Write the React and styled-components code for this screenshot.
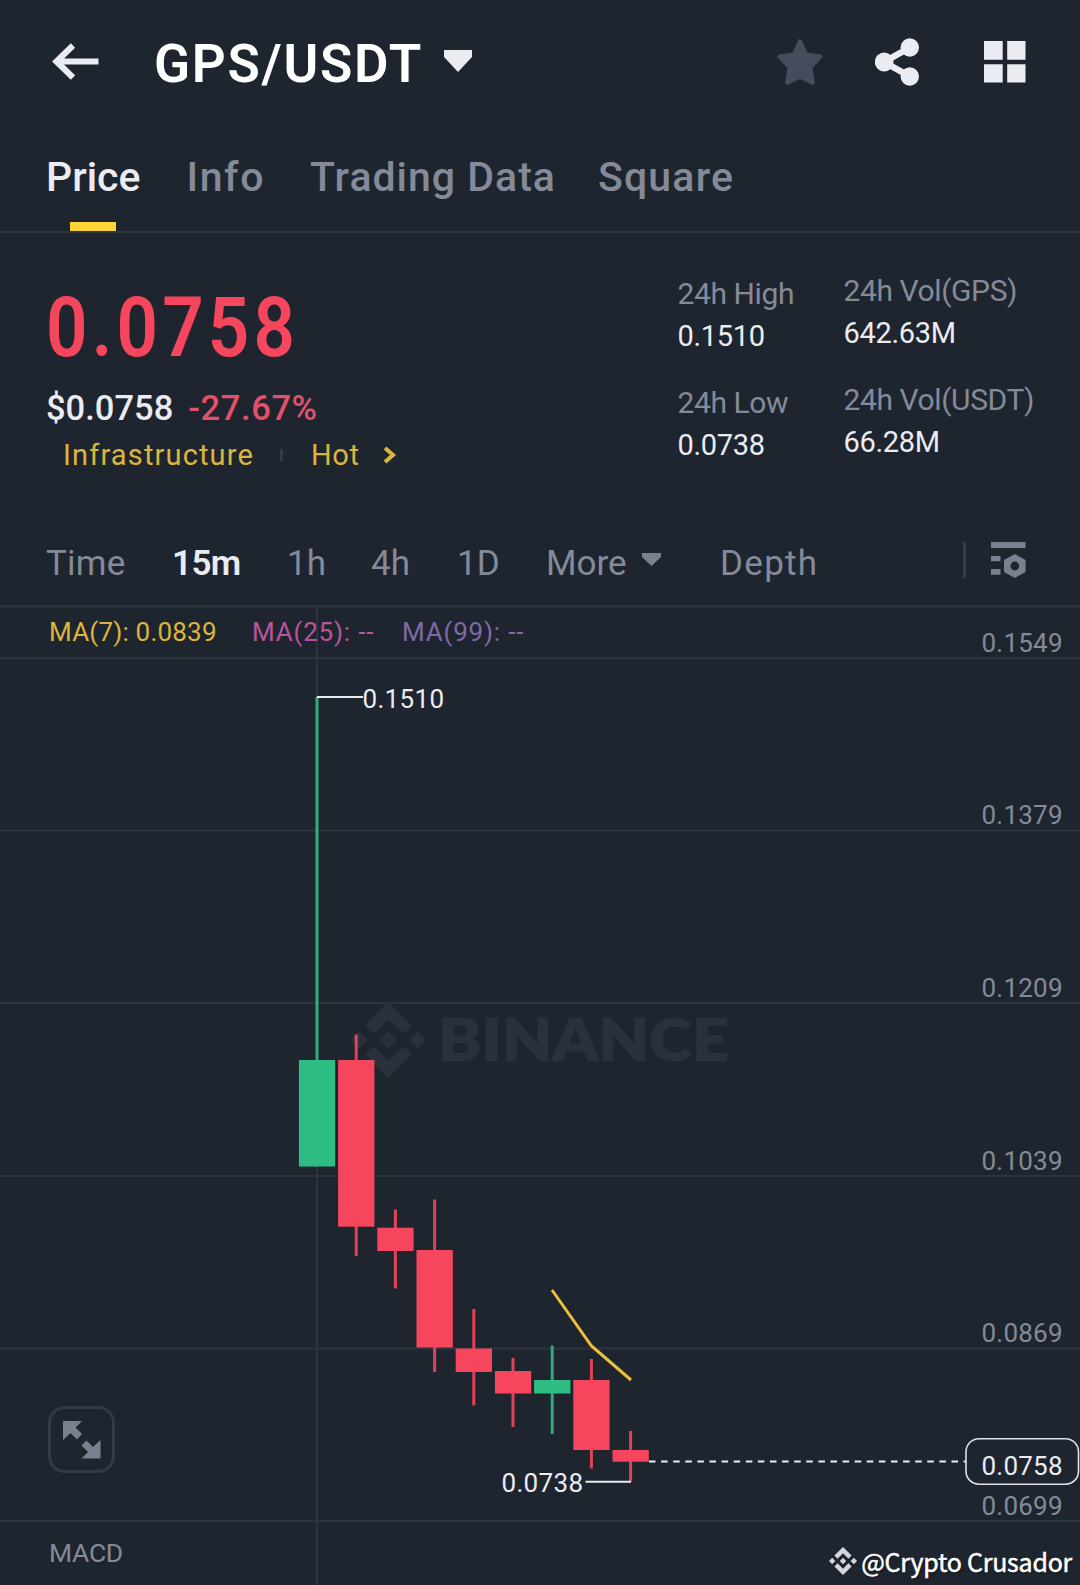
import React from "react";
import styled, { createGlobalStyle } from "styled-components";

const GlobalStyle = createGlobalStyle`
  :root {
    --color-bg: #1f252f;
    --color-line: #2f3540;
    --color-light: #eaecf2;
    --color-muted: #858a98;
    --color-red: #f6465d;
    --color-green: #2ebd85;
    --color-yellow: #dcb63c;
  }

  * {
    box-sizing: border-box;
  }

  body {
    margin: 0;
    background-color: var(--color-bg);
    font-family: Roboto, "Liberation Sans", sans-serif;
    color: var(--color-light);
  }

  svg {
    display: block;
    flex-shrink: 0;
  }
`;

const Screen = styled.div`
  width: 1080px;
  height: 1585px;
  overflow: hidden;
  display: flex;
  flex-direction: column;
  background-color: var(--color-bg);
`;

const Header = styled.header`
  height: 123px;
  padding: 0 54px 0 52px;
  display: flex;
  align-items: center;
`;

const Title = styled.h1`
  margin: 0 21px 0 55px;
  padding-top: 4px;
  font-size: 53px;
  line-height: 60px;
  font-weight: 600;
  letter-spacing: 1.7px;
  color: #fff;
`;

const TitleArrow = styled.svg`
  margin-bottom: 1px;
`;

const HeaderActions = styled.div`
  margin-left: auto;
  display: flex;
  align-items: center;
`;

const ActionIcon = styled.svg`
  margin-left: ${(props) => props.$gap || 0}px;
`;

const Tabs = styled.nav`
  height: 110px;
  padding-left: 46px;
  display: flex;
  border-bottom: 2px solid var(--color-line);
`;

const Tab = styled.div`
  height: 108px;
  padding-top: 9px;
  margin-right: ${(props) => props.$gap || 45}px;
  display: flex;
  flex-direction: column;
  align-items: center;
  font-size: 41px;
  line-height: 90px;
  font-weight: 500;
  letter-spacing: ${(props) => props.$spacing || 0}px;
  color: ${(props) => (props.$active ? "var(--color-light)" : "var(--color-muted)")};
`;

const TabBar = styled.div`
  width: 46px;
  height: 9px;
  background-color: #fcd535;
`;

const Ticker = styled.section`
  height: 287px;
  padding-left: 46px;
  display: flex;
`;

const PriceColumn = styled.div`
  width: 631.5px;
  padding-top: 53px;
`;

const LastPrice = styled.div`
  font-size: 83.5px;
  line-height: 84px;
  font-weight: 600;
  letter-spacing: 4.8px;
  transform: scaleX(0.87);
  transform-origin: left;
  color: var(--color-red);
`;

const Change = styled.div`
  margin-top: 18px;
  display: flex;
  gap: 15px;
  font-size: 34.5px;
  line-height: 40px;
  font-weight: 500;
`;

const ChangePercent = styled.span`
  letter-spacing: 0.6px;
  color: #e2506a;
`;

const Tags = styled.div`
  margin-top: 9px;
  padding-left: 17px;
  display: flex;
  align-items: center;
  font-size: 29px;
  line-height: 36px;
  color: var(--color-yellow);
`;

const Tag = styled.span`
  letter-spacing: ${(props) => props.$spacing}px;
`;

const TagDivider = styled.span`
  width: 3px;
  height: 12px;
  margin: 0 28px 0 26px;
  background-color: #353b47;
`;

const TagArrow = styled.svg`
  margin: 0 0 1px 23px;
`;

const StatColumn = styled.div`
  width: 166px;
  padding-top: ${(props) => props.$top}px;
  display: flex;
  flex-direction: column;
  gap: 23px;
  white-space: nowrap;
`;

const StatLabel = styled.div`
  font-size: 30px;
  line-height: 43px;
  letter-spacing: -0.4px;
  color: var(--color-muted);
`;

const StatValue = styled.div`
  font-size: 29px;
  line-height: 43px;
  letter-spacing: -0.3px;
`;

const Intervals = styled.div`
  height: 88px;
  padding: 0 54px 0 46px;
  display: flex;
  align-items: center;
  border-bottom: 3px solid #2b313c;
`;

const Interval = styled.span`
  width: ${(props) => props.$width}px;
  padding-top: 2px;
  display: flex;
  align-items: flex-start;
  gap: 15px;
  font-size: 35px;
  line-height: 40px;
  font-weight: ${(props) => (props.$active ? 600 : 400)};
  letter-spacing: ${(props) => props.$spacing || 0}px;
  color: ${(props) => (props.$active ? "var(--color-light)" : "var(--color-muted)")};

  & svg {
    margin-top: 9px;
  }
`;

const IntervalTools = styled.div`
  margin-left: auto;
  padding-bottom: 5px;
  display: flex;
  align-items: center;
  gap: 25px;
`;

const IntervalDivider = styled.span`
  width: 3px;
  height: 36px;
  background-color: #353b47;
`;

const ChartArea = styled.section`
  position: relative;
  height: 977px;
`;

const Legend = styled.div`
  position: absolute;
  top: 9px;
  left: 49px;
  display: flex;
  font-size: 26px;
  line-height: 30px;
  white-space: nowrap;
`;

const LegendItem = styled.span`
  width: ${(props) => props.$width}px;
  letter-spacing: ${(props) => props.$spacing || 0}px;
  color: ${(props) => props.$color};
`;

const ExpandButton = styled.button`
  position: absolute;
  left: 48px;
  top: 798px;
  width: 67px;
  height: 67px;
  padding: 0;
  display: flex;
  align-items: center;
  justify-content: center;
  background: none;
  border: 3px solid #333a45;
  border-radius: 17px;
`;

const PaneLabel = styled.div`
  position: absolute;
  left: 49px;
  top: 930px;
  font-size: 26.5px;
  line-height: 30px;
  letter-spacing: -0.3px;
  color: var(--color-muted);
`;

const Author = styled.div`
  position: absolute;
  right: 8px;
  bottom: 4px;
  display: flex;
  align-items: center;
  gap: 4px;
  font-family: "Noto Sans CJK SC", "Noto Sans", sans-serif;
  font-size: 25px;
  line-height: 40px;
  font-weight: 400;
  letter-spacing: -0.25px;
  color: #fff;
  -webkit-text-stroke: 0.5px #fff;
  text-shadow: 1px 1px 2px rgba(0, 0, 0, 0.6);
`;

const gridLines = [
  { y: 658, label: "0.1549" },
  { y: 830.5, label: "0.1379" },
  { y: 1003, label: "0.1209" },
  { y: 1176, label: "0.1039" },
  { y: 1348.5, label: "0.0869" },
  { y: 1521, label: "0.0699" },
];

const candles = [
  { x: 317, high: 697, top: 1060, bottom: 1166.5, low: 1166.5, up: true },
  { x: 356.2, high: 1034.5, top: 1060, bottom: 1226.7, low: 1256 },
  { x: 395.4, high: 1209.5, top: 1227.7, bottom: 1251, low: 1288.5 },
  { x: 434.6, high: 1199.5, top: 1250, bottom: 1347.5, low: 1372 },
  { x: 473.8, high: 1309, top: 1348.5, bottom: 1372, low: 1405.5 },
  { x: 513, high: 1358, top: 1371, bottom: 1393.5, low: 1427 },
  { x: 552.2, high: 1345.5, top: 1380, bottom: 1393.5, low: 1434, up: true },
  { x: 591.4, high: 1359, top: 1380, bottom: 1450, low: 1468.5 },
  { x: 630.6, high: 1431, top: 1450, bottom: 1461.7, low: 1481.5 },
];

const BinanceMark = ({ x, y, size, color }) => (
  <svg x={x} y={y} width={size} height={size} viewBox="0 0 126.6 126.6" fill={color}>
    <path d="M38.7 53.2 63.3 28.6l24.6 24.6 14.3-14.3L63.3 0 24.4 38.9z" />
    <path d="m0 63.3 14.3-14.3 14.3 14.3-14.3 14.3z" />
    <path d="m38.7 73.4 24.6 24.6 24.6-24.6 14.3 14.3-38.9 38.9-38.9-38.9z" />
    <path d="m98 63.3 14.3-14.3 14.3 14.3-14.3 14.3z" />
    <path d="m48.8 63.3 14.5-14.5 14.5 14.5-14.5 14.5z" />
  </svg>
);

const Candle = ({ candle }) => {
  const color = candle.up ? "#2ebd85" : "#f6465d";

  return (
    <g fill={color}>
      <rect
        x={candle.x - 1.5}
        y={candle.high}
        width="3"
        height={candle.low - candle.high}
        opacity="0.9"
      />
      <rect
        x={candle.x - 18.1}
        y={candle.top}
        width="36.3"
        height={candle.bottom - candle.top}
      />
    </g>
  );
};

const Chart = () => (
  <svg
    width="1080"
    height="977"
    viewBox="0 608 1080 977"
    fontFamily="Roboto, sans-serif"
    fontSize="26"
  >
    {gridLines.map((line) => (
      <rect key={line.label} x="0" y={line.y - 1} width="1080" height="2" fill="#2d343f" />
    ))}
    <rect x="316" y="608" width="2" height="977" fill="#2d343f" />

    <BinanceMark x={350.5} y={1002} size={76} color="#2b313c" />
    <text
      x="438"
      y="1060.5"
      fontFamily="Lato, sans-serif"
      fontSize="58"
      fontWeight="800"
      textLength="291"
      lengthAdjust="spacingAndGlyphs"
      fill="#2b313c"
      stroke="#2b313c"
      strokeWidth="0.8"
    >
      BINANCE
    </text>

    {candles.map((candle) => (
      <Candle key={candle.x} candle={candle} />
    ))}
    <polyline
      points="552,1290 591.5,1346 631,1380"
      fill="none"
      stroke="#ebc03a"
      strokeWidth="3"
    />

    <path d="M317 697H363M585.5 1481.7H631" stroke="#eaecf2" strokeWidth="2" />
    <text x="362.5" y="708" textLength="81.5" fill="#eaecf2">
      0.1510
    </text>
    <text x="501.5" y="1492" textLength="81.5" fill="#eaecf2">
      0.0738
    </text>

    {gridLines.map((line) => (
      <text key={line.label} x="981.5" y={line.y - 6.5} textLength="81" fill="#858a98">
        {line.label}
      </text>
    ))}

    <path
      d="M649 1461.5H966"
      stroke="#eaecf2"
      strokeWidth="1.8"
      strokeDasharray="6.5 5.6"
    />
    <rect
      x="966"
      y="1438.7"
      width="112.5"
      height="45.5"
      rx="13"
      fill="#1f252f"
      stroke="#dfe1e8"
      strokeWidth="1.6"
    />
    <text x="981.5" y="1474.5" textLength="81" fill="#eaecf2">
      0.0758
    </text>
  </svg>
);

const App = () => {
  return (
    <Screen>
      <GlobalStyle />

      <Header>
        <svg width="47" height="38" viewBox="0 0 47 38" fill="none" stroke="#eaecf2">
          <path d="M46.5 18.5H5M21 2.5 4.5 18.5 21 34.5" strokeWidth="6.2" />
        </svg>
        <Title>GPS/USDT</Title>
        <TitleArrow width="28" height="22" viewBox="0 0 28 22" fill="#eaecf2">
          <path d="M0 0H28V7L14 22 0 7z" />
        </TitleArrow>
        <HeaderActions>
          <ActionIcon width="46" height="48" viewBox="0 0 46 48" fill="#454c5c">
            <path
              d="M23 3 29 16.5 43.5 18.5 33.5 29 35.8 45 23 38.8 10.2 45 12.5 29 2.5 18.5 17 16.5z"
              stroke="#454c5c"
              strokeWidth="4"
              strokeLinejoin="round"
            />
          </ActionIcon>
          <ActionIcon $gap={52} width="44" height="48" viewBox="0 0 44 48" fill="#eaecf2">
            <path d="M35 9.5 9 24 35 38.5" fill="none" stroke="#eaecf2" strokeWidth="6.5" />
            <circle cx="34.8" cy="9.5" r="9.2" />
            <circle cx="9.2" cy="24" r="9.4" />
            <circle cx="34.8" cy="38.5" r="9.2" />
          </ActionIcon>
          <ActionIcon $gap={65} width="42" height="42" viewBox="0 0 42 42" fill="#eaecf2">
            <path d="M0 0H18.7V18.7H0zM23.2 0H41.5V18.7H23.2zM0 23.2H18.7V41.5H0zM23.2 23.2H41.5V41.5H23.2z" />
          </ActionIcon>
        </HeaderActions>
      </Header>

      <Tabs>
        <Tab $active $gap={46}>
          Price
          <TabBar />
        </Tab>
        <Tab $spacing={1.6}>Info</Tab>
        <Tab $spacing={1} $gap={42}>
          Trading Data
        </Tab>
        <Tab $spacing={1.2}>Square</Tab>
      </Tabs>

      <Ticker>
        <PriceColumn>
          <LastPrice>0.0758</LastPrice>
          <Change>
            <span>$0.0758</span>
            <ChangePercent>-27.67%</ChangePercent>
          </Change>
          <Tags>
            <Tag $spacing={1.15}>Infrastructure</Tag>
            <TagDivider />
            <Tag $spacing={0.6}>Hot</Tag>
            <TagArrow
              width="14"
              height="18"
              viewBox="0 0 14 18"
              fill="none"
              stroke="#dcb63c"
              strokeWidth="4"
            >
              <path d="M2 2 10 9 2 16" />
            </TagArrow>
          </Tags>
        </PriceColumn>
        <StatColumn $top={39}>
          <div>
            <StatLabel>24h High</StatLabel>
            <StatValue>0.1510</StatValue>
          </div>
          <div>
            <StatLabel>24h Low</StatLabel>
            <StatValue>0.0738</StatValue>
          </div>
        </StatColumn>
        <StatColumn $top={35.5}>
          <div>
            <StatLabel>24h Vol(GPS)</StatLabel>
            <StatValue>642.63M</StatValue>
          </div>
          <div>
            <StatLabel>24h Vol(USDT)</StatLabel>
            <StatValue>66.28M</StatValue>
          </div>
        </StatColumn>
      </Ticker>

      <Intervals>
        <Interval $width={126} $spacing={0.2}>
          Time
        </Interval>
        <Interval $width={115} $spacing={-0.6} $active>
          15m
        </Interval>
        <Interval $width={84}>1h</Interval>
        <Interval $width={86}>4h</Interval>
        <Interval $width={89}>1D</Interval>
        <Interval $width={174}>
          More
          <svg width="19" height="13" viewBox="0 0 19 13" fill="#7b8090">
            <path d="M0 0H19V4L9.5 13 0 4z" />
          </svg>
        </Interval>
        <Interval $width={100} $spacing={1.3}>
          Depth
        </Interval>
        <IntervalTools>
          <IntervalDivider />
          <svg width="35" height="36" viewBox="0 0 35 36" fill="#7b8090">
            <path d="M0 0H34.5V6H0zM0 14H9.5V19.3H0zM0 27H9.5V32.7H0z" />
            <path
              fillRule="evenodd"
              d="M23.8 12 34.6 18V30L23.8 36 13 30V18zM23.8 19.6A4.4 4.4 0 1 0 23.8 28.4 4.4 4.4 0 1 0 23.8 19.6z"
            />
          </svg>
        </IntervalTools>
      </Intervals>

      <ChartArea>
        <Chart />
        <Legend>
          <LegendItem $width={203} $spacing={0.2} $color="var(--color-yellow)">
            MA(7): 0.0839
          </LegendItem>
          <LegendItem $width={150} $spacing={0.8} $color="#b9559c">
            MA(25): --
          </LegendItem>
          <LegendItem $width={130} $spacing={0.8} $color="#8069a8">
            MA(99): --
          </LegendItem>
        </Legend>
        <ExpandButton>
          <svg width="38" height="38" viewBox="0 0 38 38" fill="#7b8090">
            <path d="M0 0H19L12.5 6.5 19 13 14 18.5 7.5 12 0 19z" />
            <path d="M37.5 37.5H18.5L25 31 18.5 24.5 23.5 19.5 30 26 37.5 19z" />
          </svg>
        </ExpandButton>
        <PaneLabel>MACD</PaneLabel>
        <Author>
          <BinanceMark size={28} color="#d5d7dc" />
          @Crypto Crusador
        </Author>
      </ChartArea>
    </Screen>
  );
};

export default App;
